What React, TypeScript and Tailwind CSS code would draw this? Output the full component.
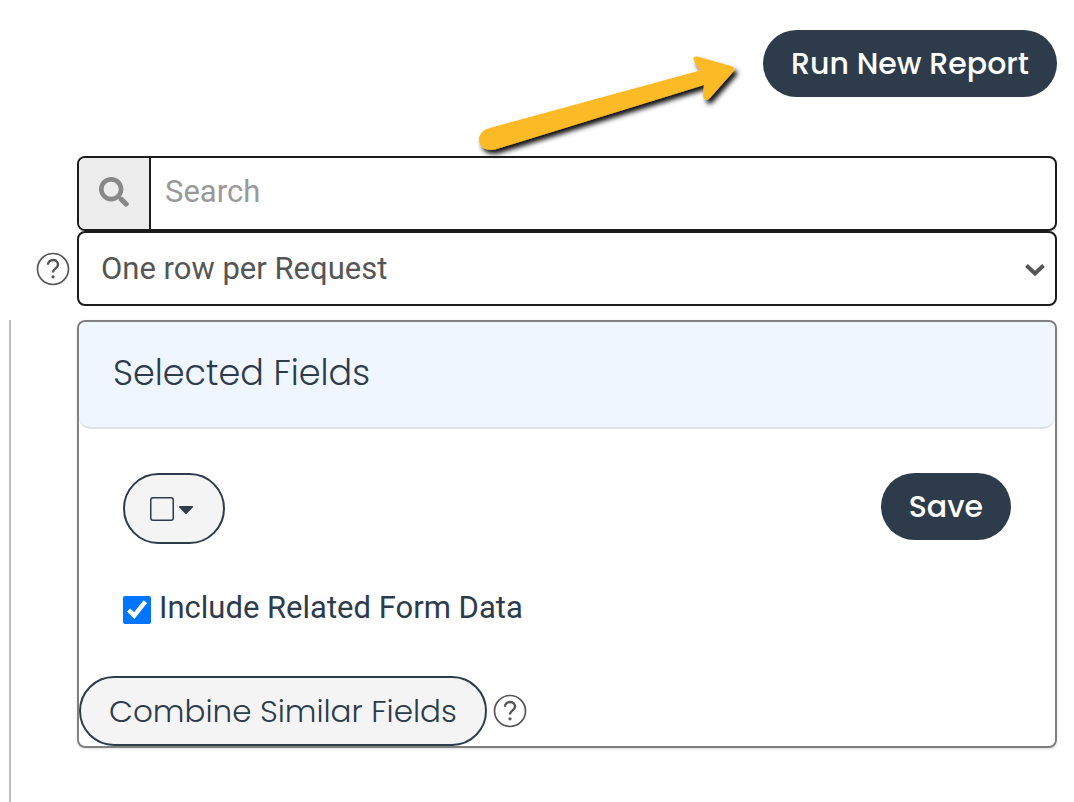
import type { ReactNode } from "react";
import { BsSquare } from "react-icons/bs";
import { FaCaretDown, FaSearch } from "react-icons/fa";

export default function App() {
  return (
    <div className="flex min-h-screen flex-col bg-white pr-[17px] font-[Roboto,sans-serif] text-[31px] leading-9 text-[#2d3b4b]">
      <header className="flex justify-end pt-[30px]">
        <div className="relative">
          <PrimaryButton>Run New Report</PrimaryButton>
          <PointerArrow />
        </div>
      </header>

      <div className="mt-[59px] ml-[77px] flex h-[75px] overflow-hidden rounded-lg border-2 border-[#1c1c1c]">
        <label
          htmlFor="search"
          className="flex w-[72px] items-center justify-center border-r-2 border-[#1c1c1c] bg-[#ededed] pb-1 text-[#888]"
        >
          <FaSearch className="size-[30px]" aria-label="Search" />
        </label>
        <input
          id="search"
          type="text"
          placeholder="Search"
          className="min-w-0 flex-1 px-[14px] pb-1 outline-none placeholder:text-[#999]"
        />
      </div>

      <div className="flex items-center">
        <HelpButton label="About row grouping" className="ml-9 mr-[7px]" />
        <div className="relative flex-1">
          <select
            aria-label="Row grouping"
            className="h-[75px] w-full appearance-none rounded-lg border-2 border-[#1c1c1c] bg-white pr-14 pl-[22px] text-[#555]"
          >
            <option>One row per Request</option>
            <option>One row per Item</option>
          </select>
          <svg
            viewBox="0 0 20 14"
            className="pointer-events-none absolute top-8 right-3 h-[14px] w-5"
            fill="none"
            stroke="#555"
            strokeWidth="4"
          >
            <path d="M1.5 2.500 10 10.500 18.500 2.500" />
          </svg>
        </div>
      </div>

      <main className="mt-[14px] ml-[9px] flex-1 border-l-2 border-[#bdbdbd] pl-[66px]">
        <section className="rounded-lg border-2 border-[#808080] shadow-sm">
          <div className="rounded-lg rounded-b-xl border-b-2 border-[#e0e2e5] bg-[#eff6ff] px-[34px] pt-[31px] pb-[34px]">
            <h2 className="font-[Poppins,Inter,sans-serif] text-[35px] leading-10 font-light">
              Selected Fields
            </h2>
          </div>

          <div className="flex items-start justify-between px-11 pt-11">
            <button
              type="button"
              aria-label="Select fields"
              className="flex h-[71px] w-[102px] items-center justify-center rounded-full border-2 border-[#2d3b4b] bg-[#f4f4f4]"
            >
              <BsSquare className="size-6" />
              <FaCaretDown className="size-6" />
            </button>
            <PrimaryButton>Save</PrimaryButton>
          </div>

          <label className="mt-[46px] flex items-center gap-2 px-11">
            <input type="checkbox" defaultChecked className="mt-1 size-7 accent-[#0075ff]" />
            Include Related Form Data
          </label>

          <div className="mt-[50px] flex items-center">
            <button
              type="button"
              className="h-[70px] rounded-full border-2 border-[#2d3b4b] bg-[#f4f4f4] px-7 font-[Poppins,Inter,sans-serif] font-light"
            >
              Combine Similar Fields
            </button>
            <HelpButton label="About combining fields" className="ml-[6px]" />
          </div>
        </section>
      </main>
    </div>
  );
}

function PrimaryButton({ children }: { children: ReactNode }) {
  return (
    <button
      type="button"
      className="h-[67px] rounded-full bg-[#2d3b4b] px-7 font-[Poppins,Inter,sans-serif] text-[30px] font-medium text-white"
    >
      {children}
    </button>
  );
}

function HelpButton({ label, className }: { label: string; className: string }) {
  return (
    <button type="button" aria-label={label} className={className}>
      <svg viewBox="0 0 34 34" className="size-[34px]" fill="none" stroke="#555">
        <circle cx="17" cy="17" r="15.500" strokeWidth="1.700" />
        <path d="M12 12.800C12 6.500 22 6.500 22 12.500C22 16.500 17 16.200 17 20.500" strokeWidth="2.400" />
        <circle cx="17" cy="24.800" r="1.600" fill="#555" stroke="none" />
      </svg>
    </button>
  );
}

function PointerArrow() {
  return (
    <svg
      viewBox="0 0 280 120"
      className="pointer-events-none absolute top-4 right-full mr-3 h-[120px] w-[280px] max-w-none"
      aria-hidden="true"
    >
      <defs>
        <filter id="arrow-shadow" x="-10%" y="-20%" width="120%" height="150%">
          <feDropShadow dx="3" dy="4" stdDeviation="2.5" floodColor="#000" floodOpacity="0.95" />
        </filter>
      </defs>
      <path
        d="M17 82.500 229 24.500 223 15Q221 10 226 10.500L260 20Q266 22 262 26L239 52Q233 57 232 49L233 39 24 103.500C5 107 3 87 17 82.500Z"
        fill="#fbba27"
        filter="url(#arrow-shadow)"
      />
    </svg>
  );
}
